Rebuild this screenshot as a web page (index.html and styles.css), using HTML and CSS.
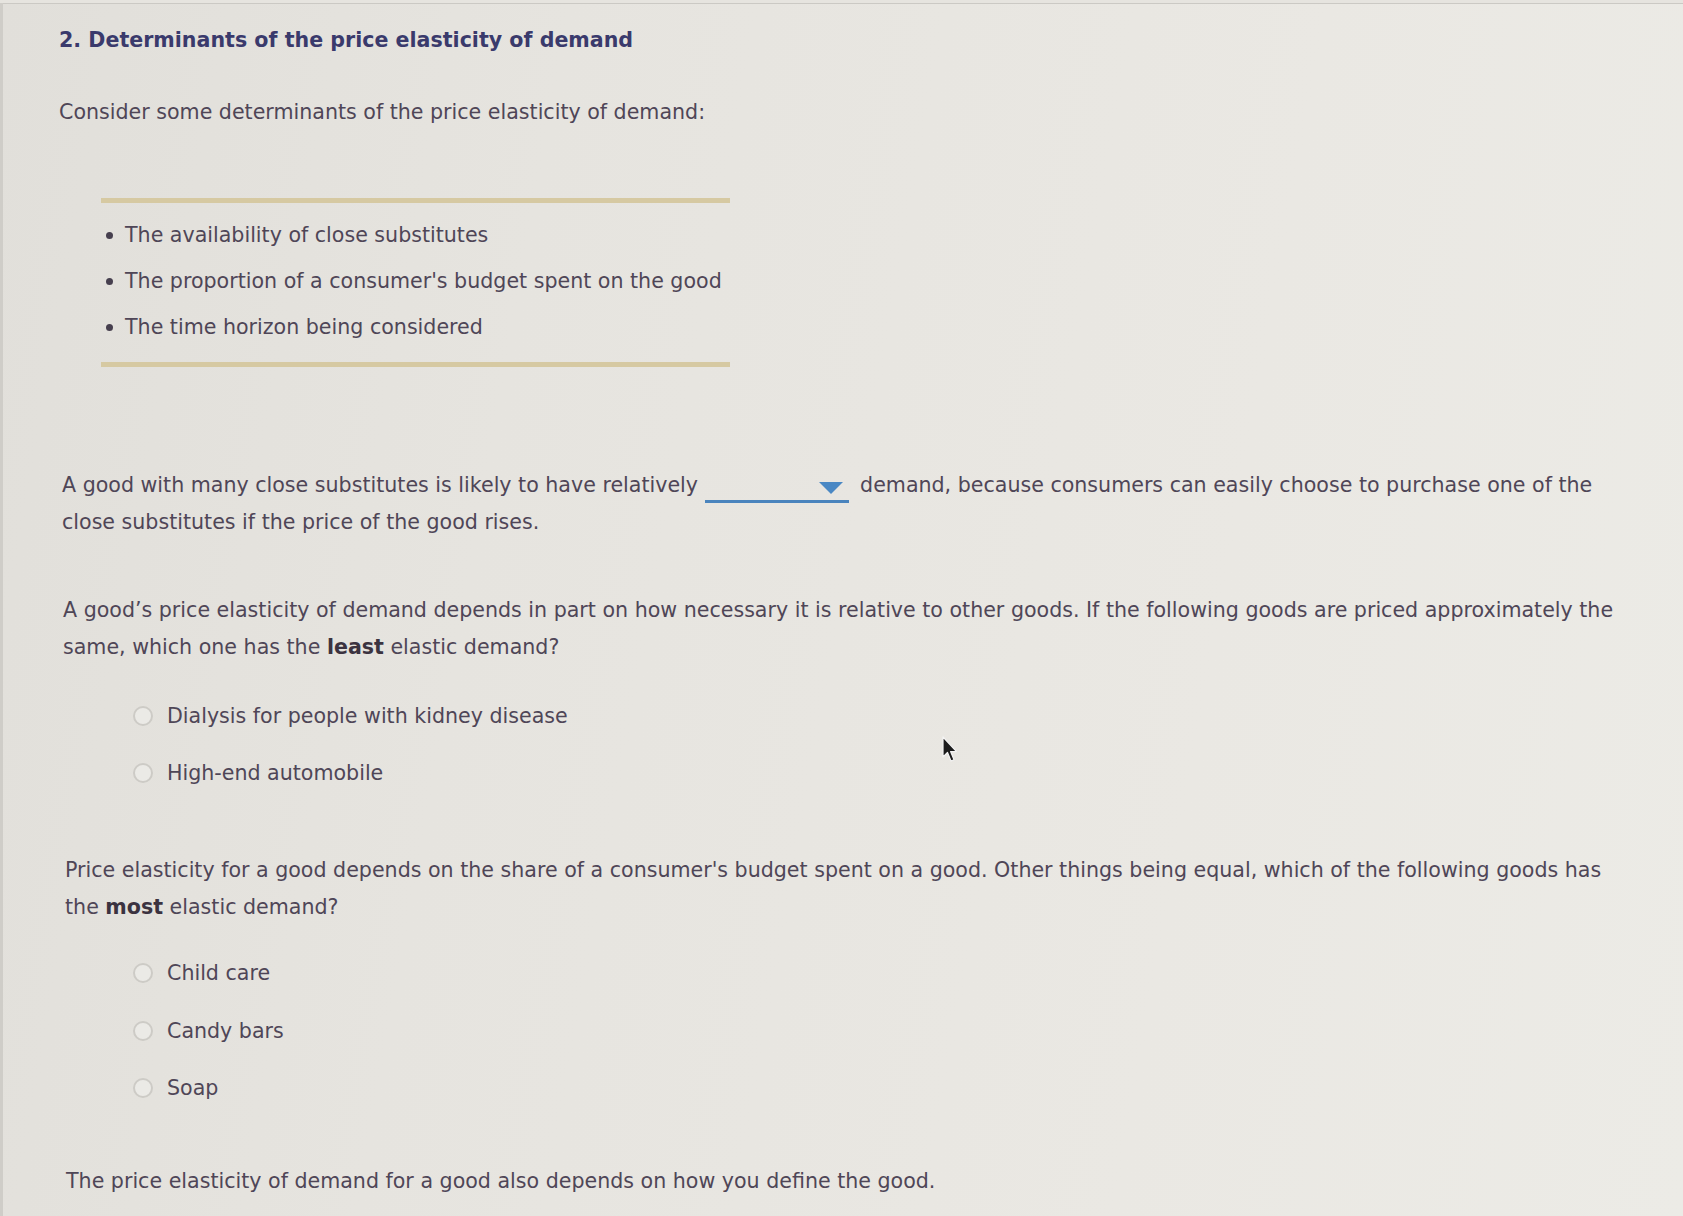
FILE: index.html
```html
<!DOCTYPE html>
<html lang="en">
<head>
<meta charset="utf-8">
<title>Determinants of the price elasticity of demand</title>
<link rel="stylesheet" href="styles.css">
</head>
<body>
<div class="screen">
  <div class="topline"></div>
  <main class="page">
    <h2 class="title">2. Determinants of the price elasticity of demand</h2>
    <p class="intro">Consider some determinants of the price elasticity of demand:</p>
    <div class="box">
      <ul class="list">
        <li>The availability of close substitutes</li>
        <li>The proportion of a consumer's budget spent on the good</li>
        <li>The time horizon being considered</li>
      </ul>
    </div>

    <p class="q q1">A good with many close substitutes is likely to have relatively <span class="dropdown"><span class="arrow"></span></span> demand, because consumers can easily choose to purchase one of the<br>close substitutes if the price of the good rises.</p>

    <p class="q q2">A good’s price elasticity of demand depends in part on how necessary it is relative to other goods. If the following goods are priced approximately the<br>same, which one has the <b>least</b> elastic demand?</p>

    <div class="options opts1">
      <label class="opt"><span class="radio"></span>Dialysis for people with kidney disease</label>
      <label class="opt"><span class="radio"></span>High-end automobile</label>
    </div>

    <p class="q q3">Price elasticity for a good depends on the share of a consumer's budget spent on a good. Other things being equal, which of the following goods has<br>the <b>most</b> elastic demand?</p>

    <div class="options opts2">
      <label class="opt opt-b"><span class="radio"></span>Child care</label>
      <label class="opt opt-b"><span class="radio"></span>Candy bars</label>
      <label class="opt opt-b"><span class="radio"></span>Soap</label>
    </div>

    <p class="q q4">The price elasticity of demand for a good also depends on how you define the good.</p>
  </main>
  <svg class="cursor" width="16" height="28" viewBox="0 0 16 28" aria-hidden="true">
    <path d="M1 1 L1 21 L5.5 16.5 L9 25 L12 23.8 L8.6 15.6 L14.5 15.6 Z" fill="#1c1c1c" stroke="#f4f4f4" stroke-width="1.2" stroke-linejoin="round"/>
  </svg>
</div>
</body>
</html>
```
FILE: styles.css
```css
html, body {
  margin: 0;
  padding: 0;
}

body {
  width: 1683px;
  height: 1216px;
  overflow: hidden;
  background: #e6e4df;
  font-family: "DejaVu Sans", Verdana, sans-serif;
  color: #4f4657;
}

.screen {
  position: relative;
  width: 1683px;
  height: 1216px;
  box-sizing: border-box;
  border-left: 3px solid #cfcdc8;
  background: linear-gradient(100deg, #e1dfda 0%, #e6e4df 30%, #eae8e3 70%, #ecebe6 100%);
}

.topline {
  height: 1px;
  margin-top: 3px;
  background: #cbc9c4;
}

.page {
  display: flex;
  flex-direction: column;
  align-items: flex-start;
  padding: 22px 0 0 56px;
  font-size: 20.6px;
}

.title {
  margin: 0;
  font-size: 20.6px;
  line-height: 28px;
  font-weight: bold;
  color: #3a3a6c;
}

.intro {
  margin: 44px 0 0;
  line-height: 28px;
}

.box {
  margin: 72px 0 0 42px;
  width: 629px;
  border-top: 5px solid #d6c9a2;
  border-bottom: 5px solid #d6c9a2;
}

.list {
  list-style: none;
  margin: 0;
  padding: 9px 0 11.5px;
}

.list li {
  position: relative;
  line-height: 46px;
  padding-left: 24px;
  white-space: nowrap;
}

.list li::before {
  content: "";
  position: absolute;
  left: 4.5px;
  top: 19.5px;
  width: 7px;
  height: 7px;
  border-radius: 50%;
  background: #463f4e;
}

.q {
  margin: 0;
  margin-left: 3px;
  line-height: 37px;
  white-space: nowrap;
}

.q b {
  color: #3b3340;
}

.q1 { margin-top: 100px; }
.q2 { margin-top: 51px; margin-left: 4px; }
.q3 { margin-top: 50px; margin-left: 6px; }
.q4 { margin-top: 46px; margin-left: 7px; }

.dropdown {
  display: inline-flex;
  justify-content: flex-end;
  align-items: flex-start;
  box-sizing: border-box;
  width: 144px;
  height: 21px;
  padding-right: 6px;
  margin-right: 5px;
  border-bottom: 3px solid #4a84bd;
  vertical-align: -2px;
}

.arrow {
  width: 0;
  height: 0;
  border-left: 12px solid transparent;
  border-right: 12px solid transparent;
  border-top: 12px solid #4a88c4;
}

.options {
  display: flex;
  flex-direction: column;
  margin-left: 74px;
}

.opts1 { margin-top: 22px; }
.opts2 { margin-top: 19px; }

.opt {
  display: flex;
  align-items: center;
  height: 57px;
  white-space: nowrap;
}

.opt-b {
  height: 57.5px;
}

.radio {
  box-sizing: border-box;
  width: 20px;
  height: 20px;
  margin-right: 14px;
  border-radius: 50%;
  border: 2px solid #cdcbc6;
  background: #ebeae6;
}

.cursor {
  position: absolute;
  left: 939px;
  top: 733px;
}
```
